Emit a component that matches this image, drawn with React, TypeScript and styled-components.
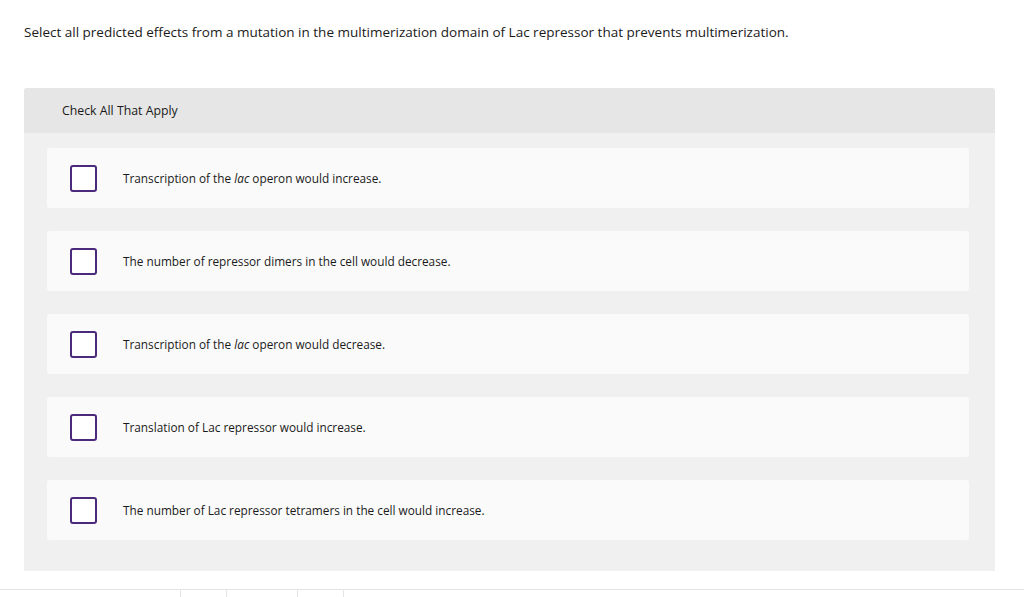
import styled, { createGlobalStyle } from "styled-components";

const GlobalStyle = createGlobalStyle`
  html, body {
    margin: 0;
    padding: 0;
    background: #ffffff;
  }
  body {
    font-family: "Open Sans", "Lato", sans-serif;
    color: #1a1a1a;
  }
`;

const Page = styled.div`
  width: 1024px;
  height: 597px;
  overflow: hidden;
  display: flex;
  flex-direction: column;
  & > * {
    flex-shrink: 0;
  }
`;

const Question = styled.p`
  margin: 0;
  padding: 24px 24px 0 24px;
  height: 88px;
  box-sizing: border-box;
  font-size: 13.5px;
  line-height: 16px;
  color: #1a1a1a;
`;

const Panel = styled.section`
  margin: 0 29px 0 24px;
  background: #f0f0f0;
  border-radius: 3px 3px 0 0;
  padding-bottom: 31px;
`;

const PanelHeader = styled.div`
  height: 45px;
  background: #e6e6e6;
  border-radius: 3px 3px 0 0;
  display: flex;
  align-items: center;
  padding-left: 38px;
  font-size: 12.3px;
  color: #1a1a1a;
`;

const OptionList = styled.div`
  display: flex;
  flex-direction: column;
  gap: 23px;
  padding: 15px 26px 0 23px;
`;

const Option = styled.label`
  height: 60px;
  background: #fafafa;
  border-radius: 3px;
  display: flex;
  align-items: center;
  padding-left: 23px;
  gap: 26px;
  font-size: 11.8px;
  color: #1a1a1a;
`;

const Box = styled.span`
  width: 27px;
  height: 27px;
  box-sizing: border-box;
  border: 2px solid #4b2a7b;
  border-radius: 3px;
  background: #ffffff;
  flex-shrink: 0;
`;

const Footer = styled.div`
  margin-top: 18px;
  border-top: 1px solid #e4e4e4;
  height: 8px;
  display: flex;
  padding-left: 180px;
`;

const Tick = styled.span<{ $w: number }>`
  width: ${(p) => p.$w}px;
  border-left: 1px solid #e4e4e4;
  &:last-child {
    border-right: 1px solid #e4e4e4;
  }
`;

const options = [
  <>Transcription of the <i>lac</i> operon would increase.</>,
  <>The number of repressor dimers in the cell would decrease.</>,
  <>Transcription of the <i>lac</i> operon would decrease.</>,
  <>Translation of Lac repressor would increase.</>,
  <>The number of Lac repressor tetramers in the cell would increase.</>,
];

export default function App() {
  return (
    <Page>
      <GlobalStyle />
      <Question>
        Select all predicted effects from a mutation in the multimerization domain of Lac
        repressor that prevents multimerization.
      </Question>
      <Panel>
        <PanelHeader>Check All That Apply</PanelHeader>
        <OptionList>
          {options.map((text, i) => (
            <Option key={i}>
              <Box />
              <span>{text}</span>
            </Option>
          ))}
        </OptionList>
      </Panel>
      <Footer>
        <Tick $w={45} />
        <Tick $w={70} />
        <Tick $w={45} />
      </Footer>
    </Page>
  );
}
